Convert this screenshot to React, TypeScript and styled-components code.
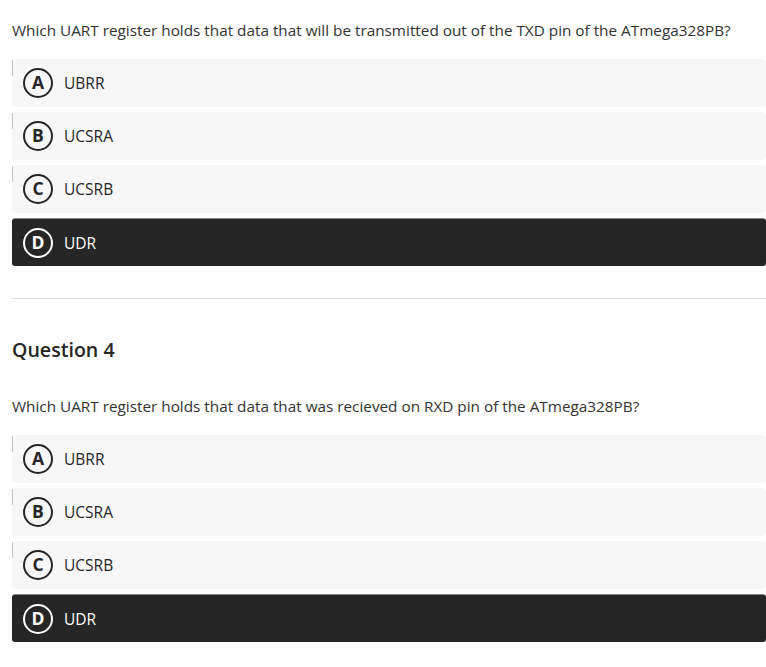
import React from "react";
import styled, { createGlobalStyle } from "styled-components";

const Global = createGlobalStyle`
  html, body { margin: 0; padding: 0; background: #fff; }
  body { font-family: "Open Sans", "Noto Sans", sans-serif; color: #262626; overflow: hidden; }
`;

const Page = styled.div`
  padding: 19px 0 0 12px;
  width: 754px;
`;

const QuestionBlock = styled.section`
  display: flex;
  flex-direction: column;
`;

const Prompt = styled.p`
  margin: 0 0 18px 0;
  font-size: 15.3px;
  line-height: 22px;
  color: #333;
`;

const Options = styled.div`
  display: flex;
  flex-direction: column;
  gap: 5px;
`;

const Option = styled.div<{ $selected?: boolean }>`
  position: relative;
  height: 48px;
  box-sizing: border-box;
  display: flex;
  align-items: center;
  gap: 11px;
  padding-left: 11px;
  border-radius: 3px;
  background: ${(p) => (p.$selected ? "#262626" : "#f7f7f7")};
  color: ${(p) => (p.$selected ? "#fff" : "#262626")};
  border-top: ${(p) => (p.$selected ? "1px solid #8a8a8a" : "none")};
  font-size: 15.5px;
  &::before {
    content: "";
    display: ${(p) => (p.$selected ? "none" : "block")};
    position: absolute;
    left: 0;
    top: 1px;
    width: 1px;
    height: 16px;
    background: #c4c4c4;
  }
`;

const Badge = styled.span<{ $selected?: boolean }>`
  width: 30px;
  height: 30px;
  box-sizing: border-box;
  border-radius: 50%;
  border: 2px solid ${(p) => (p.$selected ? "#fff" : "#262626")};
  display: flex;
  align-items: center;
  justify-content: center;
  font-weight: 700;
  font-size: 17.5px;
  line-height: 1;
`;

const Divider = styled.hr`
  margin: 32px 0 0 0;
  border: none;
  border-top: 1px solid #dcdcdc;
`;

const Heading = styled.h2`
  margin: 37px 0 31px 0;
  font-size: 19.6px;
  line-height: 28px;
  font-weight: 600;
  color: #262626;
`;

const letters = ["A", "B", "C", "D"];
const answers = ["UBRR", "UCSRA", "UCSRB", "UDR"];

function Question({ text }: { text: string }) {
  return (
    <QuestionBlock>
      <Prompt>{text}</Prompt>
      <Options>
        {answers.map((a, i) => {
          const sel = i === 3;
          return (
            <Option key={a} $selected={sel}>
              <Badge $selected={sel}>{letters[i]}</Badge>
              <span>{a}</span>
            </Option>
          );
        })}
      </Options>
    </QuestionBlock>
  );
}

export default function App() {
  return (
    <>
      <Global />
      <Page>
        <Question text="Which UART register holds that data that will be transmitted out of the TXD pin of the ATmega328PB?" />
        <Divider />
        <Heading>Question 4</Heading>
        <Question text="Which UART register holds that data that was recieved on RXD pin of the ATmega328PB?" />
      </Page>
    </>
  );
}
